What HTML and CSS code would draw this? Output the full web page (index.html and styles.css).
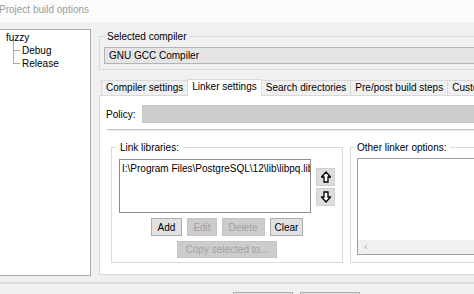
FILE: index.html
```html
<!DOCTYPE html>
<html lang="en">

<head>
    <meta charset="UTF-8">
    <title>Project build options</title>
    <link rel="stylesheet" href="styles.css">
</head>

<body>
    <div class="titlebar">Project build options</div>

    <div class="main">
        <div class="tree">
            <div class="tree-root">fuzzy</div>
            <ul class="tree-children">
                <li>Debug</li>
                <li>Release</li>
            </ul>
        </div>

        <div class="content">
            <fieldset class="group compiler-group">
                <legend>Selected compiler</legend>
                <div class="combo">GNU GCC Compiler</div>
            </fieldset>

            <div class="tabs">
                <div class="tab">Compiler settings</div>
                <div class="tab active">Linker settings</div>
                <div class="tab">Search directories</div>
                <div class="tab">Pre/post build steps</div>
                <div class="tab">Custom variables</div>
            </div>

            <div class="tab-panel">
                <div class="policy-row">
                    <span class="policy-label">Policy:</span>
                    <div class="combo combo-policy"></div>
                </div>
                <div class="separator"></div>

                <div class="linker-row">
                    <fieldset class="group libs-group">
                        <legend>Link libraries:</legend>
                        <div class="list-row">
                            <div class="listbox">I:\Program Files\PostgreSQL\12\lib\libpq.lib</div>
                            <div class="arrows">
                                <button type="button" class="arrow">
                                    <svg width="10" height="12" viewBox="0 0 10 12">
                                        <path d="M5 1 L9.5 6 H7 V11 H3 V6 H0.5 Z" fill="#fff" stroke="#000" stroke-width="1.3" stroke-linejoin="miter"/>
                                    </svg>
                                </button>
                                <button type="button" class="arrow">
                                    <svg width="10" height="12" viewBox="0 0 10 12">
                                        <path d="M5 11 L9.5 6 H7 V1 H3 V6 H0.5 Z" fill="#fff" stroke="#000" stroke-width="1.3" stroke-linejoin="miter"/>
                                    </svg>
                                </button>
                            </div>
                        </div>
                        <div class="actions">
                            <button type="button">Add</button>
                            <button type="button" class="btn-edit" disabled>Edit</button>
                            <button type="button" disabled>Delete</button>
                            <button type="button" class="btn-clear">Clear</button>
                        </div>
                        <div class="actions">
                            <button type="button" class="btn-copy" disabled>Copy selected to...</button>
                        </div>
                    </fieldset>

                    <fieldset class="group other-group">
                        <legend>Other linker options:</legend>
                        <div class="textbox">
                            <div class="text-area"></div>
                            <div class="hscroll">&lsaquo;</div>
                        </div>
                    </fieldset>
                </div>
            </div>
        </div>
    </div>

    <div class="footer">
        <button type="button"></button>
        <button type="button"></button>
    </div>
</body>

</html>
```

FILE: styles.css
```css
html,
body {
    margin: 0;
    overflow: hidden;
}

body {
    width: 474px;
    height: 294px;
    font-family: "Liberation Sans", Arial, sans-serif;
    font-size: 10px;
    color: #000;
    background-color: #f0f0f0;
}

.titlebar {
    height: 22px;
    line-height: 19px;
    text-indent: -1px;
    background-color: #fcfcfc;
    color: #9a9a9a;
}

.main {
    display: flex;
    gap: 8px;
    padding-top: 7px;
}

/* project tree */
.tree {
    flex: none;
    width: 92px;
    height: 247px;
    margin-left: -1px;
    padding: 1px 0 0 6px;
    box-sizing: border-box;
    background-color: #fff;
    border: 1px solid #a9a9a9;
    line-height: 13px;
}

.tree-children {
    list-style: none;
    margin: 0 0 0 7px;
    padding: 0;
}

.tree-children li {
    position: relative;
    padding-left: 9px;
}

.tree-children li::before {
    content: "";
    position: absolute;
    left: 0;
    top: -3px;
    width: 6px;
    height: 9px;
    border-left: 1px solid #a8a8a8;
    border-bottom: 1px solid #a8a8a8;
}

.tree-children li:not(:last-child)::after {
    content: "";
    position: absolute;
    left: 0;
    top: 6px;
    height: 7px;
    border-left: 1px solid #a8a8a8;
}

/* right side */
.content {
    flex: none;
    width: 430px;
    padding-top: 1px;
}

.group {
    margin: 0;
    border: 1px solid #dadada;
}

.group legend {
    padding: 0 3px;
    line-height: 13px;
}

.compiler-group {
    padding: 4px 4px 5px 4px;
}

.combo {
    height: 15px;
    line-height: 15px;
    padding-left: 4px;
    background-color: #e5e5e5;
    border: 1px solid #b4b4b4;
}

.tabs {
    display: flex;
    align-items: flex-end;
    height: 16px;
    margin-top: 9px;
    padding-left: 2px;
}

.tab {
    height: 14px;
    line-height: 14px;
    padding: 0 4px;
    margin-right: -1px;
    white-space: nowrap;
    background-color: #f0f0f0;
    border: 1px solid #d9d9d9;
    border-bottom: none;
}

.tab.active {
    position: relative;
    z-index: 1;
    height: 16px;
    line-height: 13px;
    margin-bottom: -1px;
    background-color: #fff;
}

.tab-panel {
    height: 180px;
    box-sizing: border-box;
    padding: 9px 0 0 6px;
    background-color: #fff;
    border: 1px solid #d9d9d9;
}

.policy-row {
    display: flex;
    align-items: center;
}

.policy-label {
    width: 36px;
}

.combo-policy {
    flex: 1;
    height: 16px;
    background-color: #cdcdcd;
    border-color: #c6c6c6;
}

.separator {
    margin: 6px 0 0 1px;
    border-top: 1px solid #c4c4c4;
    border-bottom: 1px solid #ececec;
}

.linker-row {
    display: flex;
    gap: 7px;
    margin: 10px 0 0 5px;
}

.libs-group {
    flex: none;
    width: 216px;
    padding: 5px 7px 4px 7px;
}

.libs-group legend {
    margin-left: -3px;
    padding: 0 4px;
}

.list-row {
    display: flex;
    gap: 5px;
}

.listbox {
    width: 188px;
    height: 50px;
    padding: 2px 0 0 2px;
    line-height: 13px;
    white-space: nowrap;
    overflow: hidden;
    border: 1px solid #8c8c8c;
}

.arrows {
    display: flex;
    flex-direction: column;
    gap: 2px;
    margin-top: 9px;
}

.arrow {
    display: flex;
    align-items: center;
    justify-content: center;
    width: 19px;
    height: 18px;
    padding: 0;
    background-color: #dddddd;
    border: 1px solid #d0d0d0;
}

.actions {
    display: flex;
    justify-content: center;
    gap: 5px;
    margin-top: 5px;
}

.actions button {
    height: 18px;
    padding: 0 6px;
    font-family: inherit;
    font-size: 10px;
    color: #000;
    background-color: #e1e1e1;
    border: 1px solid #adadad;
    border-radius: 0;
}

.actions button:disabled {
    color: #a2a2a2;
    background-color: #cccccc;
    border-color: #c4c4c4;
}

.actions .btn-edit {
    padding: 0 5px;
}

.actions .btn-clear {
    padding: 0 4px;
}

.actions .btn-copy {
    width: 100px;
    height: 17px;
}

.other-group {
    flex: none;
    width: 140px;
    padding: 4px 6px 6px 6px;
}

.other-group legend {
    margin-left: -3px;
}

.textbox {
    height: 95px;
    display: flex;
    flex-direction: column;
    border: 1px solid #a0a0a0;
    border-right: none;
}

.text-area {
    flex: 1;
}

.hscroll {
    height: 14px;
    line-height: 13px;
    padding-left: 6px;
    color: #b0b0b0;
    background-color: #f0f0f0;
}

.footer {
    display: flex;
    gap: 7px;
    height: 20px;
    margin-top: 6px;
    padding: 8px 0 0 233px;
    border-top: 2px solid #dcdcdc;
}

.footer button {
    width: 60px;
    height: 20px;
    background-color: #e1e1e1;
    border: 1px solid #adadad;
}
```
